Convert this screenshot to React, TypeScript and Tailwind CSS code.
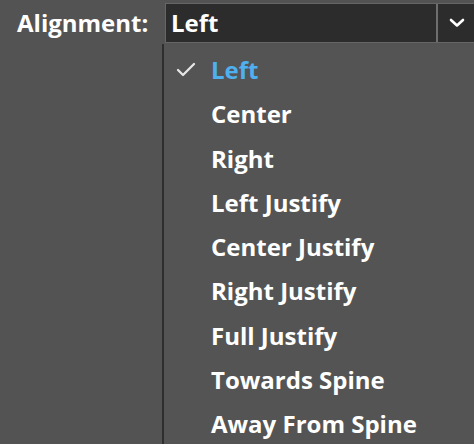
import { Check } from 'lucide-react';

const options = [
  'Left',
  'Center',
  'Right',
  'Left Justify',
  'Center Justify',
  'Right Justify',
  'Full Justify',
  'Towards Spine',
  'Away From Spine',
];

export default function App() {
  const selected = 'Left';

  return (
    <div
      className="w-[474px] h-[444px] overflow-hidden bg-[#535353] text-white"
      style={{ fontFamily: '"Open Sans", "Liberation Sans", sans-serif' }}
    >
      {/* Field row */}
      <div className="flex items-center h-[44px] pt-[2px]">
        <span className="pl-[17px] w-[165px] text-[24px] font-bold">
          Alignment:
        </span>
        <div className="flex flex-1 h-[40px] border border-r-0 border-[#666] bg-[#2c2c2c]">
          <span className="flex-1 pl-[5px] text-[24px] font-bold leading-[38px]">
            {selected}
          </span>
          <div className="w-[38px] border-l-2 border-[#6e6e6e] flex items-center justify-center pl-[2px]">
            <svg width="16" height="10" viewBox="0 0 16 10" fill="none">
              <path d="M2 2l6 5.5L14 2" stroke="white" strokeWidth="2.6" strokeLinecap="round" strokeLinejoin="round" />
            </svg>
          </div>
        </div>
      </div>

      {/* Open menu */}
      <div className="ml-[162px] border-l-2 border-[#2e2e2e] bg-[#545454] pt-[4px] h-[400px]">
        {options.map((opt) => (
          <div key={opt} className="flex items-center h-[44.25px]">
            <span className="w-[47px] flex justify-end pr-[13px]">
              {opt === selected && <Check size={24} strokeWidth={2.3} className="text-[#e6e6e6]" />}
            </span>
            <span
              className={`text-[24px] font-bold ${
                opt === selected ? 'text-[#4fb0f0]' : 'text-white'
              }`}
            >
              {opt}
            </span>
          </div>
        ))}
      </div>
    </div>
  );
}
